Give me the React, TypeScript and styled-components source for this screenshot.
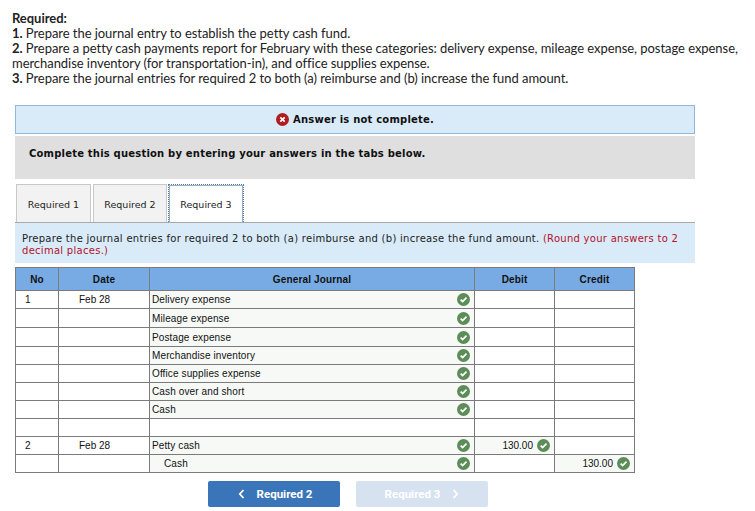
import React from "react";
import styled, { createGlobalStyle } from "styled-components";

const GlobalStyle = createGlobalStyle`
  html, body {
    margin: 0;
    padding: 0;
    background: #fff;
  }
`;

const Page = styled.div`
  width: 755px;
  height: 511px;
  overflow: hidden;
  padding-top: 11px;
  box-sizing: border-box;
`;

const Intro = styled.div`
  margin-left: 12px;
  width: 740px;
  font-family: Lato, sans-serif;
  font-size: 13px;
  line-height: 15px;
  letter-spacing: -0.05px;
  color: #222;
  white-space: nowrap;
`;

const Panel = styled.div`
  margin: 19px 0 0 15px;
  width: 680px;
`;

const Alert = styled.div`
  height: 29px;
  box-sizing: border-box;
  display: flex;
  align-items: center;
  justify-content: center;
  gap: 4px;
  background: #d9ebf9;
  border: 1px solid #8fb8e0;
  font-family: "DejaVu Sans", sans-serif;
  font-size: 10px;
  font-weight: 700;
  letter-spacing: 0.2px;
  color: #111;
`;

const Prompt = styled.div`
  height: 43px;
  margin-top: 2px;
  box-sizing: border-box;
  padding: 12px 14px;
  background: #dfdfdf;
  font-family: "DejaVu Sans", sans-serif;
  font-size: 10px;
  line-height: 12px;
  font-weight: 700;
  letter-spacing: 0.2px;
  color: #111;
`;

const Tabs = styled.div`
  display: flex;
  gap: 2px;
  margin: 5px 0 0 1px;
  height: 38px;
`;

const Tab = styled.div<{ $active?: boolean; $width: number }>`
  width: ${(p) => p.$width}px;
  margin-left: ${(p) => (p.$active ? -1 : 0)}px;
  padding-top: 2px;
  box-sizing: border-box;
  display: flex;
  align-items: center;
  justify-content: center;
  background: ${(p) => (p.$active ? "#fff" : "#f2f2f2")};
  border: ${(p) => (p.$active ? "1px dotted #3b82d0" : "1px solid #c8c8c8")};
  border-bottom: none;
  box-shadow: ${(p) =>
    p.$active ? "inset 1px 0 #aaa, inset -1px 0 #aaa, inset 0 1px #aaa" : "none"};
  font-family: "DejaVu Sans", sans-serif;
  font-size: 9.5px;
  color: #222;
`;

const Instruction = styled.div`
  height: 41px;
  box-sizing: border-box;
  padding: 10px 7px 0;
  background: #d9ebf9;
  border-top: 1px solid #a9a9a9;
  font-family: "DejaVu Sans", sans-serif;
  font-size: 10px;
  line-height: 12px;
  letter-spacing: 0.28px;
  color: #222;
`;

const Note = styled.span`
  color: #b3122a;
`;

const Journal = styled.table`
  margin-top: 4px;
  width: 620px;
  table-layout: fixed;
  border-collapse: collapse;
  border: 1px solid #7b7b7b;
  font-family: "Liberation Sans", sans-serif;
  font-size: 10px;
  color: #111;
`;

const HeadCell = styled.th`
  height: 22px;
  padding: 0;
  background: #78aae3;
  border: 1px solid #7b7b7b;
  font-size: 10px;
  font-weight: 700;
  letter-spacing: 0.15px;
  text-align: center;
`;

const Row = styled.tr<{ $height: number }>`
  height: ${(p) => p.$height}px;
`;

const Cell = styled.td<{ $filled?: boolean }>`
  padding: 0;
  border: 1px solid #7b7b7b;
  background: ${(p) => (p.$filled ? "#f6f9f6" : "#fff")};
`;

const NoText = styled.div`
  padding-left: 9px;
`;

const DateText = styled.div`
  padding-left: 20px;
`;

const EntryLine = styled.div<{ $credit?: boolean }>`
  display: flex;
  align-items: center;
  justify-content: space-between;
  padding: 0 4px 0 ${(p) => (p.$credit ? 14 : 2)}px;
  letter-spacing: 0.12px;
`;

const Amount = styled.div`
  display: flex;
  align-items: center;
  justify-content: flex-end;
  gap: 4px;
  padding-right: 4px;
`;

const Buttons = styled.div`
  display: flex;
  gap: 16px;
  margin: 8px 0 0 193px;
`;

const NavButton = styled.div<{ $disabled?: boolean }>`
  width: 132px;
  height: 26px;
  box-sizing: border-box;
  padding-left: ${(p) => (p.$disabled ? 0 : 2)}px;
  display: flex;
  align-items: center;
  justify-content: center;
  gap: 12px;
  border-radius: 2px;
  background: ${(p) => (p.$disabled ? "#d7e2f1" : "#3a75b9")};
  color: #fff;
  font-family: Roboto, sans-serif;
  font-size: 11.5px;
  font-weight: 700;
`;

const CheckMark = () => (
  <svg width="13" height="13" viewBox="0 0 13 13" style={{ display: "block", flex: "none" }}>
    <circle cx="6.5" cy="6.5" r="6.5" fill="#5c8d58" />
    <path d="M3.6 6.7 5.6 8.5 9.5 4.7" fill="none" stroke="#fff" strokeWidth="1.7" />
  </svg>
);

const ErrorMark = () => (
  <svg width="13" height="13" viewBox="0 0 13 13" style={{ display: "block" }}>
    <circle cx="6.5" cy="6.5" r="6.5" fill="#b01c22" />
    <path d="M4.3 4.3 8.7 8.7M8.7 4.3 4.3 8.7" stroke="#fff" strokeWidth="1.7" />
  </svg>
);

const Chevron = ({ left }: { left?: boolean }) => (
  <svg width="7" height="10" viewBox="0 0 7 10" style={{ display: "block" }}>
    <path
      d={left ? "M5.5 1 1.8 5l3.7 4" : "M1.5 1 5.2 5 1.5 9"}
      fill="none"
      stroke="#fff"
      strokeWidth="1.8"
    />
  </svg>
);

type Entry = {
  no?: string;
  date?: string;
  account?: string;
  credit?: boolean;
  debitAmount?: string;
  creditAmount?: string;
  height: number;
};

const ENTRIES: Entry[] = [
  { no: "1", date: "Feb 28", account: "Delivery expense", height: 18 },
  { account: "Mileage expense", height: 19 },
  { account: "Postage expense", height: 19 },
  { account: "Merchandise inventory", height: 18 },
  { account: "Office supplies expense", height: 18 },
  { account: "Cash over and short", height: 18 },
  { account: "Cash", height: 18 },
  { height: 18 },
  { no: "2", date: "Feb 28", account: "Petty cash", debitAmount: "130.00", height: 18 },
  { account: "Cash", credit: true, creditAmount: "130.00", height: 18 },
];

const App: React.FC = () => (
  <Page>
    <GlobalStyle />
    <Intro>
      <b>Required:</b>
      <br />
      <b>1.</b> Prepare the journal entry to establish the petty cash fund.
      <br />
      <b>2.</b> Prepare a petty cash payments report for February with these categories: delivery expense, mileage expense, postage expense,
      <br />
      merchandise inventory (for transportation-in), and office supplies expense.
      <br />
      <b>3.</b> Prepare the journal entries for required 2 to both (a) reimburse and (b) increase the fund amount.
    </Intro>
    <Panel>
      <Alert>
        <ErrorMark />
        Answer is not complete.
      </Alert>
      <Prompt>Complete this question by entering your answers in the tabs below.</Prompt>
      <Tabs>
        <Tab $width={75}>Required 1</Tab>
        <Tab $width={74}>Required 2</Tab>
        <Tab $active $width={76}>Required 3</Tab>
      </Tabs>
      <Instruction>
        Prepare the journal entries for required 2 to both (a) reimburse and (b) increase the fund amount.{" "}
        <Note>(Round your answers to 2 decimal places.)</Note>
      </Instruction>
      <Journal>
        <colgroup>
          <col width="43" />
          <col width="91" />
          <col width="325" />
          <col width="80" />
          <col width="80" />
        </colgroup>
        <thead>
          <tr>
            <HeadCell>No</HeadCell>
            <HeadCell>Date</HeadCell>
            <HeadCell>General Journal</HeadCell>
            <HeadCell>Debit</HeadCell>
            <HeadCell>Credit</HeadCell>
          </tr>
        </thead>
        <tbody>
          {ENTRIES.map((entry, i) => (
            <Row key={i} $height={entry.height}>
              <Cell>{entry.no && <NoText>{entry.no}</NoText>}</Cell>
              <Cell>{entry.date && <DateText>{entry.date}</DateText>}</Cell>
              <Cell $filled={!!entry.account}>
                {entry.account && (
                  <EntryLine $credit={entry.credit}>
                    {entry.account}
                    <CheckMark />
                  </EntryLine>
                )}
              </Cell>
              <Cell $filled={!!entry.debitAmount}>
                {entry.debitAmount && (
                  <Amount>
                    {entry.debitAmount}
                    <CheckMark />
                  </Amount>
                )}
              </Cell>
              <Cell $filled={!!entry.creditAmount}>
                {entry.creditAmount && (
                  <Amount>
                    {entry.creditAmount}
                    <CheckMark />
                  </Amount>
                )}
              </Cell>
            </Row>
          ))}
        </tbody>
      </Journal>
      <Buttons>
        <NavButton>
          <Chevron left />
          Required 2
        </NavButton>
        <NavButton $disabled>
          Required 3
          <Chevron />
        </NavButton>
      </Buttons>
    </Panel>
  </Page>
);

export default App;
